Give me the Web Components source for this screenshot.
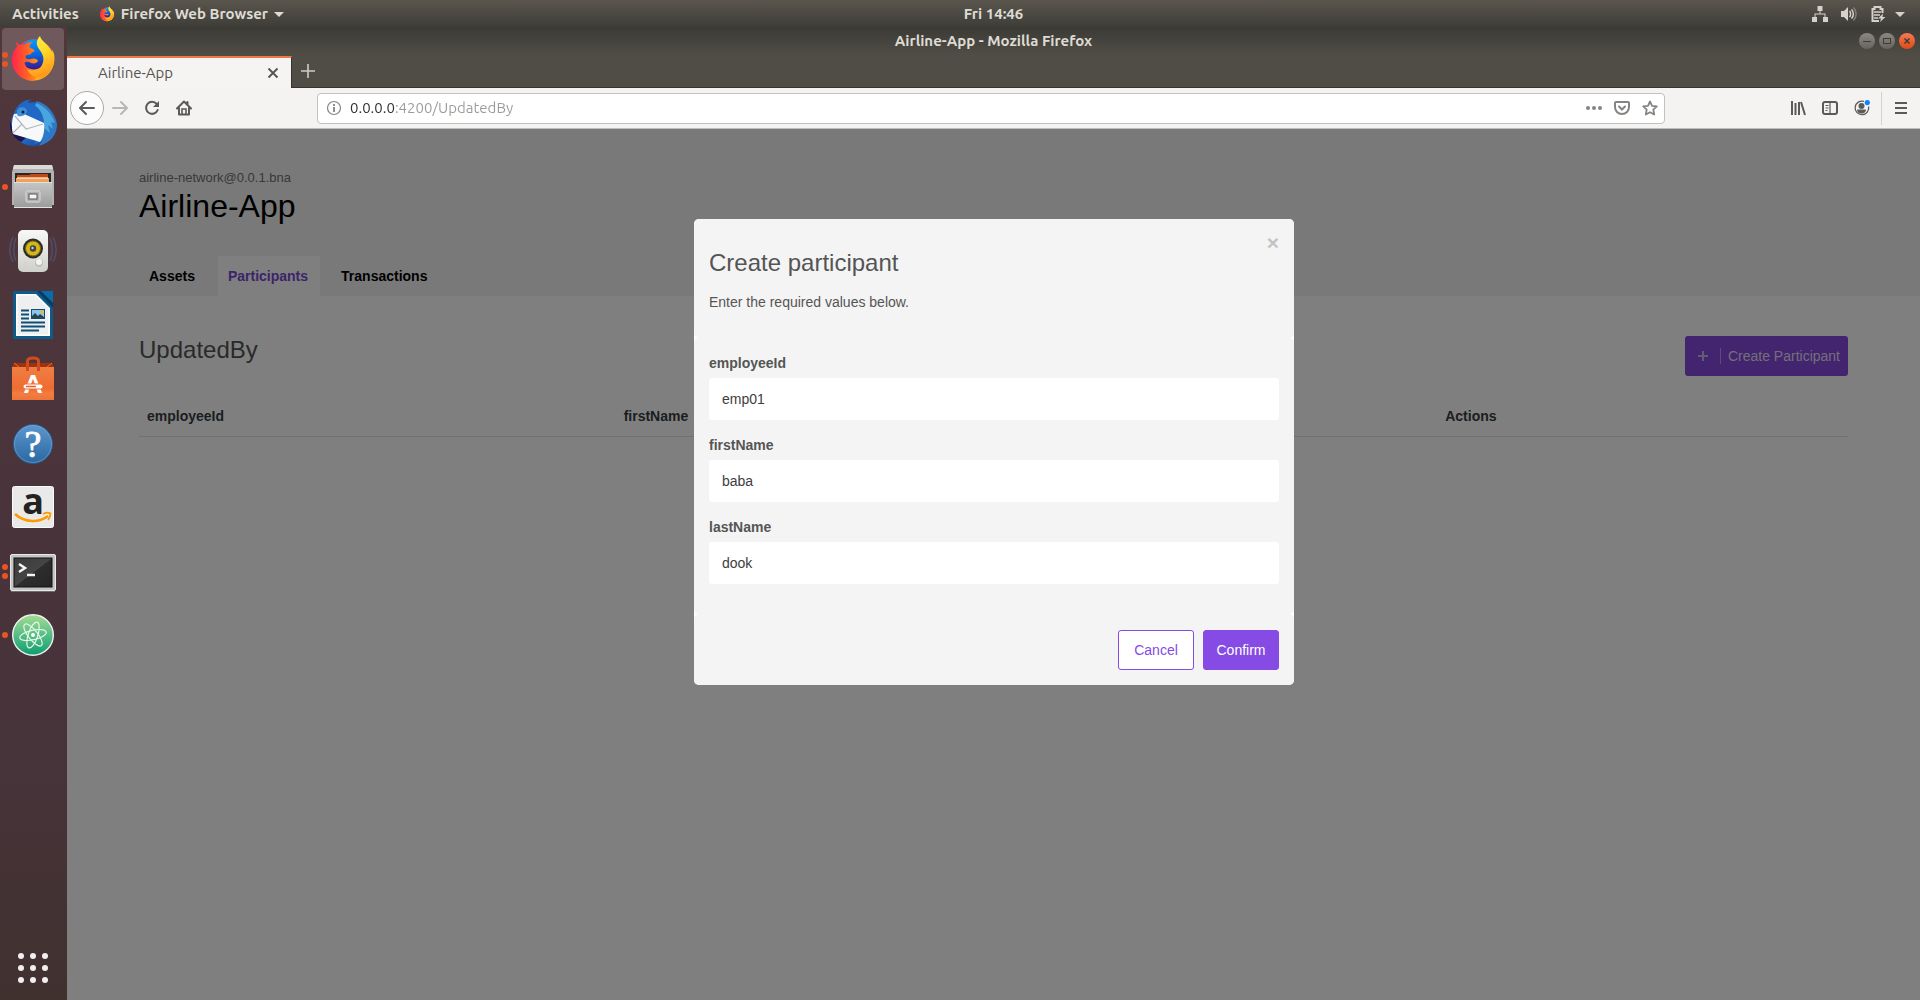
<!DOCTYPE html>
<html lang="en">
<head>
<meta charset="utf-8">
<title>Airline-App</title>
<style>
    html, body {
        margin: 0;
        height: 100%;
    }

    body {
        display: grid;
        grid-template: 27px minmax(0, 1fr) / 67px minmax(0, 1fr);
        font-family: 'Liberation Sans', Arial, sans-serif;
        font-size: 14px;
        line-height: 20px;
        overflow: hidden;
    }

    desktop-panel {
        grid-column: 1 / -1;
    }
</style>
</head>
<body>
<desktop-panel></desktop-panel>

<app-dock>
    <dock-item name="firefox" label="Firefox" windows="2" active></dock-item>
    <dock-item name="thunderbird" label="Thunderbird"></dock-item>
    <dock-item name="files" label="Files" windows="1"></dock-item>
    <dock-item name="rhythmbox" label="Rhythmbox"></dock-item>
    <dock-item name="writer" label="Writer"></dock-item>
    <dock-item name="software" label="Software"></dock-item>
    <dock-item name="help" label="Help"></dock-item>
    <dock-item name="amazon" label="Amazon"></dock-item>
    <dock-item name="terminal" label="Terminal" windows="2"></dock-item>
    <dock-item name="atom" label="Atom" windows="1"></dock-item>
</app-dock>

<browser-window>
    <airline-page></airline-page>
    <modal-dialog slot="overlay" heading="Create participant">
        <span slot="intro">Enter the required values below.</span>
        <form-field label="employeeId" value="emp01"></form-field>
        <form-field label="firstName" value="baba"></form-field>
        <form-field label="lastName" value="dook"></form-field>
        <custom-button slot="footer" variant="secondary">Cancel</custom-button>
        <custom-button slot="footer">Confirm</custom-button>
    </modal-dialog>
</browser-window>

<script>
const ICONS = {
    firefox: [48, `
        <defs>
            <linearGradient id="fb" x1="0" y1="0.2" x2="1" y2="0.6"><stop offset="0" stop-color="#ff1f55"/><stop offset=".25" stop-color="#ff3a3a"/><stop offset=".55" stop-color="#ff8a1c"/><stop offset="1" stop-color="#ffcb1e"/></linearGradient>
            <linearGradient id="ff" x1="0" y1="0" x2=".3" y2="1"><stop offset="0" stop-color="#fff44a"/><stop offset=".5" stop-color="#ffd92a"/><stop offset="1" stop-color="#ff9a1a"/></linearGradient>
            <linearGradient id="fg" x1=".4" y1="0" x2=".5" y2="1"><stop offset="0" stop-color="#0a9bff"/><stop offset=".55" stop-color="#0a62d8"/><stop offset="1" stop-color="#3a1590"/></linearGradient>
            <linearGradient id="fh" x1="0" y1="0" x2="1" y2="0"><stop offset="0" stop-color="#ff2450"/><stop offset=".5" stop-color="#ff5a28"/><stop offset="1" stop-color="#ff9a1c"/></linearGradient>
        </defs>
        <circle cx="24.500" cy="25" r="20.500" fill="url(#fb)"/>
        <circle cx="25" cy="19.500" r="15" fill="url(#fg)"/>
        <path d="M7 6.500C6.600 9 7.600 10 8.500 11C4 16 2 22 3 28C5 39 14 46 25 46L30 36C24 37 17 34 15.500 28C17 26 20 27 22 28C25 29 28 28 29 26C28 23 24 23 21.500 24C18 25 16 23 16.500 21C18 19 21 20 22 19C22 17 26 17 25.500 15.500C24 13 21.500 14 20.500 12C20.500 10 22 8 23.500 7.500C20 7 17 8 15 10C13 9.500 12 10 11 10C9 9 8 8 7 6.500Z" fill="url(#fh)"/>
        <path d="M31 1C27 5 27 10 30 14C34 19 36 24 33 30C30 36 22 37 18 34C21 40 27 44 34 43C42 39 45.500 31 45.500 23C45.500 19 44.500 17 43 15C43 17 43 18 42.500 19C41 12 37 9 34.500 6.500C32.500 4.500 31.500 3 31 1Z" fill="url(#ff)"/>`],
    thunderbird: [48, `
        <defs>
            <linearGradient id="tb" x1="0" y1="0" x2="1" y2="1"><stop offset="0" stop-color="#1450b8"/><stop offset=".5" stop-color="#2470cc"/><stop offset="1" stop-color="#123a90"/></linearGradient>
        </defs>
        <circle cx="24" cy="25" r="22" fill="url(#tb)"/>
        <path d="M1 22C0 31 4 39 12 43L18 38L5 34Z" fill="#1c1350"/>
        <path d="M27 2C38 4 46 14 48 25C48 35 43 43 30 47L33 42L25 45L31 38C36 32 36 22 32 16Z" fill="#2e78c8"/>
        <path d="M27 4C36 7 43 15 46 24L42 23L44 30L39 26L41 34L35 29C36 20 32 13 24 12Z" fill="#48a5dd"/>
        <path d="M5 14C9 4 17 0 22 1C19 2 18 3 20 4C28 6 34 12 35 24L20 17L13 12Z" fill="#2267c5"/>
        <path d="M5 15L13 14L35 24C36 32 34 39 31 43L4 35C2 28 3 20 5 15Z" fill="#f7f8f9"/>
        <path d="M6 17L17 30L34 25M4 34L13 25" fill="none" stroke="#b4b9be" stroke-width="1.200"/>
        <path d="M10 9C14 7 18 9 18 13C16 17 12 18 9 17C7 14 8 11 10 9Z" fill="#3d8fd8"/>
        <circle cx="14" cy="13" r="1.500" fill="#101a30"/>`],
    files: [48, `
        <defs>
            <linearGradient id="fd" x1="0" y1="0" x2="0" y2="1"><stop offset="0" stop-color="#c6c6c6"/><stop offset="1" stop-color="#9b9b9b"/></linearGradient>
        </defs>
        <path d="M5 2H43L45 9V42H3V9Z" fill="#b2b2b2"/><path d="M5 2H43L44 6H4Z" fill="#dadada"/>
        <rect x="6" y="10" width="36" height="9" fill="#292725"/>
        <path d="M8 12H20L22 11H39V19H8Z" fill="#c24a18"/>
        <path d="M7 15H40V19H7Z" fill="#f0a057"/><path d="M8 15H39" stroke="#fff2e2" stroke-width="1.200"/>
        <rect x="5" y="19" width="38" height="26" fill="url(#fd)"/>
        <path d="M5 19.500H43M5 44.500H43" stroke="#e2e2e2"/>
        <rect x="17" y="28" width="14" height="11" rx="1.500" fill="#b2b2b2" stroke="#dcdcdc"/>
        <rect x="20" y="31" width="8" height="5" fill="#f5f5f5" stroke="#555"/>`],
    rhythmbox: [48, `
        <defs>
            <linearGradient id="rb" x1="0" y1="0" x2="0" y2="1"><stop offset="0" stop-color="#f8f8f6"/><stop offset="1" stop-color="#cfcfcb"/></linearGradient>
        </defs>
        <g fill="none" stroke="#566593" stroke-width="1.500" opacity=".5"><path d="M7 11C4 17 4 28 7 34M4 10C0 18 0 27 4 35M41 11C44 17 44 28 41 34M44 10C48 18 48 27 44 35"/></g>
        <rect x="9" y="3" width="30" height="42" rx="5" fill="url(#rb)"/>
        <circle cx="24" cy="21.500" r="10" fill="#2b2b2b"/>
        <circle cx="24" cy="21.500" r="7.500" fill="#d4b51b" stroke="#756714"/>
        <circle cx="24" cy="21.500" r="3.200" fill="#444"/><circle cx="23.500" cy="21" r="1.200" fill="#ccc"/>
        <circle cx="30" cy="36" r="4" fill="#bfbfbd"/><circle cx="30" cy="35" r="3" fill="#f3f3f1"/>
        <path d="M15 36H19V39H15Z" fill="none" stroke="#d0d0cd"/>`],
    writer: [48, `
        <path d="M5 0H31L44 13V48H4V1Z" fill="#0e5a8b"/><path d="M32 0H44V13Z" fill="#0a6cab"/><path d="M28 0H32L44 12V17Z" fill="#073d63"/>
        <path d="M7 3H27L41 17V45H7Z" fill="#fff"/><path d="M8.500 4.500H26L39.500 18V43.500H8.500Z" fill="#efefef"/>
        <path d="M12 19.500H20M12 23.500H20M12 27.500H20M12 31.500H36M12 35.500H36M12 39.500H30" stroke="#0e4f78" stroke-width="2"/>
        <rect x="22" y="18" width="14" height="10" fill="#0e4f78"/><rect x="23" y="19" width="12" height="8" fill="#8bc7e8"/>
        <circle cx="33" cy="21" r="1.800" fill="#f4b43c"/><path d="M23 27V25L26 22L29 25L31 23L35 26V27Z" fill="#28444f"/>`],
    software: [48, `
        <defs>
            <linearGradient id="sw" x1="0" y1="0" x2="0" y2="1"><stop offset="0" stop-color="#ef7f45"/><stop offset=".65" stop-color="#ee6c30"/><stop offset=".8" stop-color="#f27d42"/><stop offset="1" stop-color="#ef7337"/></linearGradient>
        </defs>
        <path d="M5 8H43L45 12H3Z" fill="#a0330e"/><path d="M5 8L10 12M43 8L38 12" stroke="#f06a30"/>
        <rect x="3" y="12" width="42" height="33" fill="url(#sw)"/>
        <path d="M18.500 16V6C18.500 2 29.500 2 29.500 6V16" fill="none" stroke="#cf4b1c" stroke-width="3"/>
        <text x="24" y="38" text-anchor="middle" font-family="Lato, sans-serif" font-weight="900" font-size="25" fill="#fff">A</text>
        <rect x="14" y="29" width="20" height="5" rx="2.500" fill="#fff" stroke="#ee6c30"/><path d="M17 31.500H27" stroke="#ee5a20" stroke-width="1.500"/>`],
    help: [48, `
        <defs>
            <linearGradient id="hp" x1="0" y1="0" x2="0" y2="1"><stop offset="0" stop-color="#5d97d0"/><stop offset="1" stop-color="#2a689f"/></linearGradient>
        </defs>
        <circle cx="24" cy="25" r="19.500" fill="url(#hp)" stroke="#285d8e"/><circle cx="24" cy="25" r="18.500" fill="none" stroke="#7fb0de" opacity=".5"/>
        <text x="24" y="38" text-anchor="middle" font-family="'Liberation Serif', serif" font-size="38" fill="#fff" stroke="#fff" stroke-width=".8">?</text>`],
    amazon: [48, `
        <rect x="3.500" y="3.500" width="41" height="41" rx="2" fill="#e9e9e9" stroke="#fafafa"/>
        <text x="24" y="31" text-anchor="middle" font-family="'Open Sans', sans-serif" font-weight="700" font-size="36" fill="#222">a</text>
        <path d="M6 31C16 40 30 40 39 33" fill="none" stroke="#f90" stroke-width="2.600"/>
        <path d="M34 31C37 29.500 40 29.500 41.500 30.500C41.500 33 40.500 35 39 37" fill="none" stroke="#f90" stroke-width="1.800"/>`],
    terminal: [48, `
        <defs>
            <linearGradient id="tm" x1="0" y1="0" x2="1" y2="1"><stop offset="0" stop-color="#3a3a3a"/><stop offset=".5" stop-color="#454545"/><stop offset=".51" stop-color="#2d2d2d"/><stop offset="1" stop-color="#252525"/></linearGradient>
        </defs>
        <rect x="1.500" y="7.500" width="45" height="36" rx="1.500" fill="#c4c4c4" stroke="#e8e8e8"/><path d="M2 44.500H46" stroke="#6d6d6d"/>
        <rect x="5" y="11" width="38" height="29" fill="url(#tm)" stroke="#111"/>
        <path d="M10 17L16 21L10 25M18 28H26" fill="none" stroke="#f4f4f4" stroke-width="2.500"/>`],
    atom: [48, `
        <defs>
            <linearGradient id="at" x1="0" y1="0" x2="0" y2="1"><stop offset="0" stop-color="#a3dc92"/><stop offset=".55" stop-color="#4fba85"/><stop offset="1" stop-color="#0c9d70"/></linearGradient>
        </defs>
        <circle cx="24" cy="24" r="20.300" fill="url(#at)" stroke="#f1f3f1" stroke-width="1.400"/>
        <g fill="none" stroke="#e6f8e6" stroke-width="1.200"><ellipse cx="24" cy="24" rx="13.500" ry="4.800" transform="rotate(-12 24 24)"/><ellipse cx="24" cy="24" rx="13.500" ry="4.800" transform="rotate(52 24 24)"/><ellipse cx="24" cy="24" rx="13.500" ry="4.800" transform="rotate(108 24 24)"/></g>
        <circle cx="24" cy="24" r="2" fill="#fff"/>`],
    apps: [48, `<g fill="#f1efef"><circle cx="12" cy="12" r="3"/><circle cx="24" cy="12" r="3"/><circle cx="36" cy="12" r="3"/><circle cx="12" cy="24" r="3"/><circle cx="24" cy="24" r="3"/><circle cx="36" cy="24" r="3"/><circle cx="12" cy="36" r="3"/><circle cx="24" cy="36" r="3"/><circle cx="36" cy="36" r="3"/></g>`],
    caret: [10, `<path d="M0 3H10L5 8Z" fill="currentColor"/>`],
    network: [16, `<path d="M5.500 0H10.500V5H8.500V7.500H13.500V11H16V16H11V11H12.500V8.500H3.500V11H5V16H0V11H2.500V7.500H7.500V5H5.500Z" fill="currentColor"/>`],
    sound: [16, `<path d="M0 5H3L7 1V15L3 11H0Z" fill="currentColor"/><path d="M8.500 5C10 6.500 10 9.500 8.500 11M10.500 3.500C13 6 13 10 10.500 12.500" fill="none" stroke="currentColor" stroke-width="1.500"/><path d="M12.500 1.500C16 5 16 11 12.500 14.500" fill="none" stroke="currentColor" stroke-width="1.500" opacity=".4"/>`],
    battery: [16, `<path d="M9 15H2.500V3H4.500V1H10.500V3H12.500V7" fill="none" stroke="currentColor" stroke-width="2"/><path d="M4 6H11M4 9H10M4 12H8" stroke="currentColor" stroke-width="1.300"/><path d="M13 7.500L8 12.500H11L10 16L15.500 11H12.500Z" fill="currentColor"/>`],
    min: [16, `<path d="M4 8.500H12" stroke="currentColor"/>`],
    max: [16, `<rect x="4.500" y="5.500" width="7" height="5" fill="none" stroke="currentColor"/>`],
    shut: [16, `<path d="M5.500 5.500L10.500 10.500M10.500 5.500L5.500 10.500" stroke="currentColor" stroke-width="1.500"/>`],
    close: [16, `<path d="M3.500 3.500L12.500 12.500M12.500 3.500L3.500 12.500" stroke="currentColor" stroke-width="1.800"/>`],
    plus: [16, `<path d="M8 1V15M1 8H15" stroke="currentColor" stroke-width="1.600"/>`],
    add: [16, `<path d="M8 3V13M3 8H13" stroke="currentColor" stroke-width="2"/>`],
    back: [16, `<path d="M15 8H1.500M7 2L1 8L7 14" fill="none" stroke="currentColor" stroke-width="2" stroke-linecap="round" stroke-linejoin="round"/>`],
    forward: [16, `<path d="M1 8H14.500M9 2L15 8L9 14" fill="none" stroke="currentColor" stroke-width="2" stroke-linecap="round" stroke-linejoin="round"/>`],
    reload: [16, `<path d="M12.700 4A6 6 0 1 0 13.700 10" fill="none" stroke="currentColor" stroke-width="2" stroke-linecap="round"/><path d="M15 1V7H9Z" fill="currentColor"/>`],
    home: [16, `<path d="M1 8.500L8 1.500L15 8.500M3 8V14.500H13V8M11.500 4.500V2" fill="none" stroke="currentColor" stroke-width="2" stroke-linecap="round" stroke-linejoin="round"/><path d="M6 14V9H10V14" fill="none" stroke="currentColor" stroke-width="1.600"/>`],
    info: [16, `<circle cx="8" cy="8" r="6.500" fill="none" stroke="currentColor" stroke-width="1.200"/><path d="M8 7V12M8 4V6" stroke="currentColor" stroke-width="1.800"/>`],
    more: [16, `<g fill="currentColor"><circle cx="2" cy="8" r="2"/><circle cx="8" cy="8" r="2"/><circle cx="14" cy="8" r="2"/></g>`],
    pocket: [16, `<path d="M2 2H14Q15 2 15 3V7C15 11 12 14 8 14S1 11 1 7V3Q1 2 2 2Z" fill="none" stroke="currentColor" stroke-width="2"/><path d="M5 6.500L8 9.500L11 6.500" fill="none" stroke="currentColor" stroke-width="2" stroke-linecap="round"/>`],
    star: [16, `<path d="M8 1.500L10 5.800L14.800 6.400L11.300 9.700L12.200 14.500L8 12.200L3.800 14.500L4.700 9.700L1.200 6.400L6 5.800Z" fill="none" stroke="currentColor" stroke-width="1.800" stroke-linejoin="round"/>`],
    library: [16, `<path d="M2 1V15M5.500 3V15M9 2V15M11 2L15 15" stroke="currentColor" stroke-width="2"/>`],
    sidebar: [16, `<rect x="1" y="2" width="14" height="12" rx="2" fill="none" stroke="currentColor" stroke-width="2"/><path d="M8 2V14M3.500 5.500H6.500M3.500 8H6.500M3.500 10.500H5.500" stroke="currentColor" stroke-width="1.200"/>`],
    account: [16, `<path d="M10 1.400A6.800 6.800 0 1 0 14.600 6.500" fill="none" stroke="currentColor" stroke-width="1.300"/><circle cx="7.500" cy="6" r="3" fill="currentColor"/><path d="M3 9.500H12C12 12 10 13.500 7.500 13.500S3 12 3 9.500Z" fill="currentColor"/><circle cx="13.300" cy="2.600" r="2.600" fill="#0a84ff"/>`],
    menu: [16, `<path d="M2 3H14M2 8H14M2 13H14" stroke="currentColor" stroke-width="2"/>`]
};

class BaseElement extends HTMLElement {
    constructor() {
        super();
        this.attachShadow({ mode: 'open' });
    }

    connectedCallback() {
        this.render();
    }
}

class UiIcon extends BaseElement {
    render() {
        const [box, shapes] = ICONS[this.getAttribute('name')];
        const size = this.getAttribute('size') || box;

        this.shadowRoot.innerHTML = `
            <style>
                :host { display: block; flex: none; }
                svg { display: block; overflow: visible; }
            </style>
            <svg width="${size}" height="${size}" viewBox="0 0 ${box} ${box}" aria-hidden="true">${shapes}</svg>
        `;
    }
}

class DesktopPanel extends BaseElement {
    render() {
        this.shadowRoot.innerHTML = `
            <style>
                :host {
                    display: grid;
                    grid-template-columns: 67px 1fr auto 1fr;
                    align-items: center;
                    background: linear-gradient(#5a564e, #3e3d38);
                    color: #dfdbd2;
                    font: 700 15px/20px Ubuntu, 'Noto Sans', sans-serif;
                }

                nav, .tray {
                    display: flex;
                    align-items: center;
                }

                nav {
                    grid-column: 1 / 3;
                    gap: 20px;
                    padding-left: 12px;
                }

                button {
                    display: flex;
                    align-items: center;
                    gap: 6px;
                    padding: 0;
                    border: 0;
                    background: none;
                    color: inherit;
                    font: inherit;
                }

                .tray {
                    justify-content: flex-end;
                    gap: 9px;
                    padding-right: 15px;
                    color: #d5d2ca;
                }

                .status {
                    display: flex;
                    gap: 13px;
                }
            </style>
            <nav>
                <button>Activities</button>
                <button><ui-icon name="firefox" size="16"></ui-icon>Firefox Web Browser<ui-icon name="caret"></ui-icon></button>
            </nav>
            <time>Fri 14:46</time>
            <div class="tray">
                <div class="status">
                    <ui-icon name="network"></ui-icon>
                    <ui-icon name="sound"></ui-icon>
                    <ui-icon name="battery"></ui-icon>
                </div>
                <ui-icon name="caret"></ui-icon>
            </div>
        `;
    }
}

class AppDock extends BaseElement {
    render() {
        this.shadowRoot.innerHTML = `
            <style>
                :host {
                    display: flex;
                    flex-direction: column;
                    gap: 2px;
                    padding: 1px 3px 1px 2px;
                    background: linear-gradient(#50373c, #4b343b 40%, #47333a 75%, #40312f);
                }

                dock-item:last-of-type { margin-top: auto; }
            </style>
            <slot></slot>
            <dock-item name="apps" label="Show Applications"></dock-item>
        `;
    }
}

class DockItem extends BaseElement {
    render() {
        const windows = Number(this.getAttribute('windows') || 0);

        this.shadowRoot.innerHTML = `
            <style>
                :host {
                    display: block;
                    position: relative;
                }

                button {
                    display: grid;
                    place-items: center;
                    width: 100%;
                    height: 62px;
                    padding: 0;
                    border: 0;
                    border-radius: 4px;
                    background: none;
                }

                :host([active]) button { background: #6f595d; }

                .running {
                    position: absolute;
                    left: 0;
                    top: 0;
                    bottom: 0;
                    display: flex;
                    flex-direction: column;
                    justify-content: center;
                    gap: 3px;
                }

                i {
                    width: 6px;
                    height: 6px;
                    border-radius: 50%;
                    background: #e95420;
                }
            </style>
            <button aria-label="${this.getAttribute('label')}"><ui-icon name="${this.getAttribute('name')}"></ui-icon></button>
            <div class="running">${'<i></i>'.repeat(windows)}</div>
        `;
    }
}

class BrowserWindow extends BaseElement {
    render() {
        this.shadowRoot.innerHTML = `
            <style>
                :host {
                    display: flex;
                    flex-direction: column;
                    min-height: 0;
                    background: #504d46;
                }

                button {
                    display: grid;
                    place-items: center;
                    box-sizing: border-box;
                    padding: 0;
                    border: 0;
                    background: none;
                    color: inherit;
                    font: inherit;
                }

                .titlebar, .tabs, .toolbar {
                    font-family: Ubuntu, 'Noto Sans', sans-serif;
                    font-size: 15px;
                }

                .titlebar {
                    display: grid;
                    grid-template-columns: 1fr auto 1fr;
                    align-items: center;
                    height: 28px;
                    background: linear-gradient(#3b3a35, #504d46);
                    color: #dfdbd2;
                    font-weight: 700;
                }

                .title { grid-column: 2; }

                .controls {
                    display: flex;
                    justify-content: flex-end;
                    gap: 4px;
                    padding-right: 5px;
                    color: #3c3b37;
                }

                .controls button {
                    border-radius: 50%;
                    background: linear-gradient(#8a8881, #66645d);
                }

                .controls .quit { background: linear-gradient(#f37b52, #df4a16); }

                .tabs {
                    display: flex;
                    height: 32px;
                    border-bottom: 1px solid #35342f;
                    color: #cfccc5;
                }

                .tab {
                    display: flex;
                    align-items: center;
                    justify-content: space-between;
                    box-sizing: border-box;
                    width: 225px;
                    height: 32px;
                    margin-top: 1px;
                    padding: 0 10px 0 31px;
                    border-top: 2px solid #f07746;
                    border-right: 1px solid #35342f;
                    background: #f5f4f3;
                    color: #55534f;
                }

                .new { width: 32px; }

                .toolbar {
                    display: flex;
                    align-items: center;
                    box-sizing: border-box;
                    height: 41px;
                    border-bottom: 1px solid #bfbdba;
                    background: #f4f3f2;
                    color: #5b5a58;
                }

                .nav, .tools {
                    display: flex;
                    align-items: center;
                }

                .nav { padding-left: 3px; }

                .nav button { width: 32px; height: 32px; }

                .nav .back {
                    width: 34px;
                    height: 34px;
                    border: 1px solid #acaaa7;
                    border-radius: 50%;
                    background: #fcfcfc;
                }

                .nav .off { color: #b8b7b5; }

                .address {
                    display: flex;
                    flex: 1;
                    align-items: center;
                    gap: 12px;
                    box-sizing: border-box;
                    height: 31px;
                    margin: 0 117px;
                    padding: 0 6px 0 8px;
                    border: 1px solid #c3c0bd;
                    border-radius: 4px;
                    background: #fff;
                    color: #858482;
                }

                .address ui-icon + input { margin-left: -4px; }

                /* host part of the address is darker than the port and path */
                input {
                    flex: 1;
                    min-width: 0;
                    padding: 0;
                    border: 0;
                    outline: 0;
                    background: linear-gradient(90deg, #2e2e2e 45px, #9b9a98 45px);
                    background-clip: text;
                    -webkit-background-clip: text;
                    color: transparent;
                    font: inherit;
                }

                .tools button { width: 32px; height: 33px; }

                .tools .menu {
                    width: 39px;
                    margin-left: 3px;
                    border-left: 1px solid #d4d2cf;
                }

                .viewport {
                    position: relative;
                    flex: 1;
                    min-height: 0;
                    background: #fff;
                }

                .scrim {
                    position: absolute;
                    inset: 0;
                    display: flex;
                    align-items: flex-start;
                    justify-content: center;
                    padding: 90px 0 0 1px;
                    background: rgba(0, 0, 0, 0.5);
                }
            </style>
            <div class="titlebar">
                <span class="title">Airline-App - Mozilla Firefox</span>
                <div class="controls">
                    <button aria-label="Minimize"><ui-icon name="min"></ui-icon></button>
                    <button aria-label="Maximize"><ui-icon name="max"></ui-icon></button>
                    <button class="quit" aria-label="Close"><ui-icon name="shut"></ui-icon></button>
                </div>
            </div>
            <div class="tabs">
                <div class="tab">
                    <span>Airline-App</span>
                    <button aria-label="Close tab"><ui-icon name="close"></ui-icon></button>
                </div>
                <button class="new" aria-label="New tab"><ui-icon name="plus"></ui-icon></button>
            </div>
            <div class="toolbar">
                <div class="nav">
                    <button class="back" aria-label="Back"><ui-icon name="back"></ui-icon></button>
                    <button class="off" aria-label="Forward"><ui-icon name="forward"></ui-icon></button>
                    <button aria-label="Reload"><ui-icon name="reload"></ui-icon></button>
                    <button aria-label="Home"><ui-icon name="home"></ui-icon></button>
                </div>
                <div class="address">
                    <ui-icon name="info"></ui-icon>
                    <input aria-label="Address" value="0.0.0.0:4200/UpdatedBy">
                    <button aria-label="Page actions"><ui-icon name="more"></ui-icon></button>
                    <button aria-label="Save to Pocket"><ui-icon name="pocket"></ui-icon></button>
                    <button aria-label="Bookmark"><ui-icon name="star"></ui-icon></button>
                </div>
                <div class="tools">
                    <button aria-label="Library"><ui-icon name="library"></ui-icon></button>
                    <button aria-label="Sidebars"><ui-icon name="sidebar"></ui-icon></button>
                    <button aria-label="Account"><ui-icon name="account"></ui-icon></button>
                    <button class="menu" aria-label="Menu"><ui-icon name="menu"></ui-icon></button>
                </div>
            </div>
            <div class="viewport">
                <slot></slot>
                <div class="scrim"><slot name="overlay"></slot></div>
            </div>
        `;
    }
}

class AirlinePage extends BaseElement {
    render() {
        this.shadowRoot.innerHTML = `
            <style>
                :host { display: block; }

                header {
                    padding: 39px 72px 0;
                    background: #f3f3f3;
                }

                header p {
                    margin: 0;
                    color: #6e7276;
                    font-size: 13px;
                }

                h1 {
                    margin: 0 0 31px;
                    color: #000;
                    font-size: 32px;
                    font-weight: 400;
                    line-height: 37px;
                }

                nav {
                    display: flex;
                    gap: 11px;
                }

                nav a {
                    padding: 10px 12px 10px 10px;
                    color: #000;
                    font-weight: 700;
                    text-decoration: none;
                }

                nav a.current {
                    background: #fff;
                    color: #7a48d4;
                }

                main { padding: 40px 72px; }

                .heading {
                    display: flex;
                    justify-content: space-between;
                    margin-bottom: 22px;
                }

                h2 {
                    margin: 0;
                    color: #555;
                    font-size: 24px;
                    font-weight: 400;
                    line-height: 28px;
                }

                .create {
                    display: flex;
                    align-items: center;
                    height: 40px;
                    padding: 0 8px 0 10px;
                    border: 0;
                    border-radius: 3px;
                    background: #8449de;
                    color: #e6def5;
                    font: inherit;
                }

                .create ui-icon {
                    padding-right: 9px;
                    margin-right: 7px;
                    border-right: 1px solid #b79be6;
                    color: #c9b5ea;
                }

                table {
                    width: 100%;
                    border-collapse: collapse;
                    table-layout: fixed;
                }

                th {
                    width: 24%;
                    padding: 8px 8px 10px;
                    border-bottom: 1px solid #e0e2e4;
                    color: #373d42;
                    text-align: left;
                }

                th:first-child { width: 28%; }
            </style>
            <header>
                <p>airline-network@0.0.1.bna</p>
                <h1>Airline-App</h1>
                <nav>
                    <a href="#assets">Assets</a>
                    <a href="#participants" class="current">Participants</a>
                    <a href="#transactions">Transactions</a>
                </nav>
            </header>
            <main>
                <div class="heading">
                    <h2>UpdatedBy</h2>
                    <button class="create"><ui-icon name="add"></ui-icon>Create Participant</button>
                </div>
                <table>
                    <thead>
                        <tr><th>employeeId</th><th>firstName</th><th></th><th>Actions</th></tr>
                    </thead>
                </table>
            </main>
        `;
    }
}

class ModalDialog extends BaseElement {
    render() {
        this.shadowRoot.innerHTML = `
            <style>
                :host {
                    display: block;
                    position: relative;
                    width: 600px;
                    border-radius: 5px;
                    background: #fff;
                    color: #555;
                }

                header, section, footer {
                    padding: 15px;
                    border-radius: 5px;
                    background: #f4f4f4;
                }

                header { padding: 29px 15px 26px; }

                h4 {
                    margin: 0 0 14px;
                    font-size: 24px;
                    font-weight: 400;
                    line-height: 30px;
                }

                footer {
                    display: flex;
                    justify-content: flex-end;
                    gap: 9px;
                    padding-top: 16px;
                }

                .close {
                    position: absolute;
                    top: 14px;
                    right: 15px;
                    padding: 0;
                    border: 0;
                    background: none;
                    color: #c3c3c3;
                    font: 700 21px/20px 'Liberation Sans', sans-serif;
                }
            </style>
            <header>
                <button class="close" aria-label="Close">×</button>
                <h4>${this.getAttribute('heading')}</h4>
                <slot name="intro"></slot>
            </header>
            <section><slot></slot></section>
            <footer><slot name="footer"></slot></footer>
        `;
    }
}

class FormField extends BaseElement {
    render() {
        const label = this.getAttribute('label');

        this.shadowRoot.innerHTML = `
            <style>
                :host {
                    display: block;
                    margin-bottom: 15px;
                }

                label {
                    display: block;
                    margin-bottom: 5px;
                    font-weight: 700;
                }

                input {
                    display: block;
                    box-sizing: border-box;
                    width: 100%;
                    height: 42px;
                    padding: 0 13px;
                    border: 0;
                    border-radius: 3px;
                    background: #fff;
                    color: #3d3d3d;
                    font: inherit;
                }
            </style>
            <label for="${label}">${label}</label>
            <input id="${label}" value="${this.getAttribute('value')}">
        `;
    }
}

class Button extends BaseElement {
    render() {
        const variant = this.getAttribute('variant') || 'primary';

        this.shadowRoot.innerHTML = `
            <style>
                :host { display: block; }

                button {
                    box-sizing: border-box;
                    width: 76px;
                    height: 40px;
                    padding: 0;
                    border: 1px solid #854be4;
                    border-radius: 3px;
                    background: #854be4;
                    color: #fff;
                    font: inherit;
                }

                .secondary {
                    background: #fff;
                    color: #854be4;
                }
            </style>
            <button class="${variant}"><slot></slot></button>
        `;
    }
}

customElements.define('ui-icon', UiIcon);
customElements.define('desktop-panel', DesktopPanel);
customElements.define('app-dock', AppDock);
customElements.define('dock-item', DockItem);
customElements.define('browser-window', BrowserWindow);
customElements.define('airline-page', AirlinePage);
customElements.define('modal-dialog', ModalDialog);
customElements.define('form-field', FormField);
customElements.define('custom-button', Button);
</script>
</body>
</html>
